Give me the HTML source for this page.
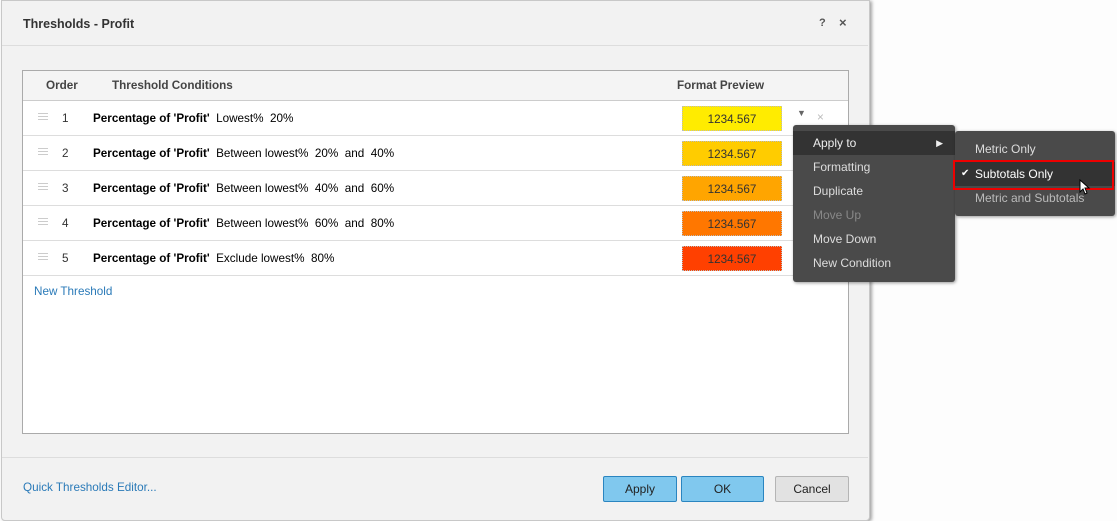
<!DOCTYPE html><html><head><style>
body{margin:0;width:1117px;height:520px;background:#fdfdfd;font-family:"Liberation Sans",sans-serif;font-size:11.7px;position:relative;overflow:hidden}
.a{position:absolute}
.dlg{left:1px;top:0;width:867px;height:519px;background:#f2f2f2;border:1px solid #c8c8c8;border-radius:0 0 4px 4px;box-shadow:2px 1px 3px rgba(0,0,0,.35)}
.tbl{left:22px;top:70px;width:825px;height:362px;background:#fff;border:1px solid #aaa}
.row{left:0;width:825px;height:34px;border-bottom:1px solid #ddd;color:#000}
.sw{left:659px;top:5px;width:100px;height:25px;text-align:center;line-height:25px;color:#333;border:1px dotted #bbb;box-sizing:border-box}
.hd{position:absolute;top:12px;left:15px;width:10px;height:7px;background:linear-gradient(#ccc 0 1px,transparent 1px 3px,#ccc 3px 4px,transparent 4px 6px,#ccc 6px 7px)}
.menu{background:#4a4a4a;border-radius:3px;box-shadow:1px 1px 3px rgba(0,0,0,.4);color:#ddd;font-size:12px}
.mi{position:absolute;left:0;right:0;height:24px;line-height:24px;padding-left:20px}
.btn{top:476px;height:24px;line-height:24px;text-align:center;font-size:12px;color:#222;border-radius:2px}
</style></head><body>
<div class="a" style="left:167px;top:0;width:103px;height:2px;background:#c8a27a"></div>
<div class="a dlg"></div>
<div class="a" style="left:2px;top:45px;width:866px;height:1px;background:#ddd"></div>
<div class="a" style="left:23px;top:17px;font-weight:bold;color:#333;font-size:12.5px">Thresholds - Profit</div>
<div class="a" style="left:819px;top:17px;font-weight:bold;color:#555;font-size:11px">?</div>
<div class="a" style="left:839px;top:15px;font-weight:bold;color:#555;font-size:13px">×</div>
<div class="a tbl">
<div class="a" style="left:0;top:0;width:825px;height:29px;background:#f4f4f4;border-bottom:1px solid #ccc"></div>
<div class="a" style="left:23px;top:8px;color:#444;font-weight:bold">Order</div>
<div class="a" style="left:89px;top:8px;color:#444;font-weight:bold">Threshold Conditions</div>
<div class="a" style="left:654px;top:8px;color:#444;font-weight:bold">Format Preview</div>
<div class="a row" style="top:30px"><div class="hd"></div><span class="a" style="left:39px;top:11px;color:#333">1</span><span class="a" style="left:70px;top:11px"><b>Percentage of 'Profit'</b>&nbsp; Lowest%&nbsp; 20%</span><div class="a sw" style="background:#ffec00">1234.567</div><span class="a" style="left:774px;top:7px;color:#666;font-size:9px">▼</span><span class="a" style="left:794px;top:10px;color:#bbb">×</span></div>
<div class="a row" style="top:65px"><div class="hd"></div><span class="a" style="left:39px;top:11px;color:#333">2</span><span class="a" style="left:70px;top:11px"><b>Percentage of 'Profit'</b>&nbsp; Between lowest%&nbsp; 20%&nbsp; and&nbsp; 40%</span><div class="a sw" style="background:#ffcc00">1234.567</div></div>
<div class="a row" style="top:100px"><div class="hd"></div><span class="a" style="left:39px;top:11px;color:#333">3</span><span class="a" style="left:70px;top:11px"><b>Percentage of 'Profit'</b>&nbsp; Between lowest%&nbsp; 40%&nbsp; and&nbsp; 60%</span><div class="a sw" style="background:#ffa500">1234.567</div></div>
<div class="a row" style="top:135px"><div class="hd"></div><span class="a" style="left:39px;top:11px;color:#333">4</span><span class="a" style="left:70px;top:11px"><b>Percentage of 'Profit'</b>&nbsp; Between lowest%&nbsp; 60%&nbsp; and&nbsp; 80%</span><div class="a sw" style="background:#ff7700">1234.567</div></div>
<div class="a row" style="top:170px"><div class="hd"></div><span class="a" style="left:39px;top:11px;color:#333">5</span><span class="a" style="left:70px;top:11px"><b>Percentage of 'Profit'</b>&nbsp; Exclude lowest%&nbsp; 80%</span><div class="a sw" style="background:#ff4000">1234.567</div></div>
<div class="a" style="left:11px;top:214px;color:#2a7ab8">New Threshold</div>
</div>
<div class="a" style="left:2px;top:457px;width:866px;height:1px;background:#ddd"></div>
<div class="a" style="left:23px;top:481px;color:#2a7ab8">Quick Thresholds Editor...</div>
<div class="a btn" style="left:603px;width:72px;background:#80c8ee;border:1px solid #2a85c0">Apply</div>
<div class="a btn" style="left:681px;width:81px;background:#80c8ee;border:1px solid #2a85c0">OK</div>
<div class="a btn" style="left:775px;width:72px;background:#e2e2e2;border:1px solid #b5b5b5">Cancel</div>
<div class="a menu" style="left:793px;top:125px;width:162px;height:157px">
<div class="mi" style="top:6px;background:#333;color:#eee">Apply to<span style="position:absolute;right:12px;font-size:9px">▶</span></div>
<div class="mi" style="top:30px">Formatting</div>
<div class="mi" style="top:54px">Duplicate</div>
<div class="mi" style="top:78px;color:#888">Move Up</div>
<div class="mi" style="top:102px">Move Down</div>
<div class="mi" style="top:126px">New Condition</div>
</div>
<div class="a menu" style="left:955px;top:131px;width:160px;height:85px">
<div class="mi" style="top:6px">Metric Only</div>
<div class="mi" style="top:31px;background:#333;color:#fff">Subtotals Only<span style="position:absolute;left:6px;font-size:10px">✔</span></div>
<div class="mi" style="top:55px;color:#bbb">Metric and Subtotals</div>
</div>
<div class="a" style="left:953px;top:160px;width:157px;height:26px;border:2px solid #e00"></div>
<svg class="a" style="left:1079px;top:179px" width="12" height="16"><path d="M1 1v12l3-3 2 5 2-1-2-5h4z" fill="#fff" stroke="#000" stroke-width="1"/></svg>
</body></html>
